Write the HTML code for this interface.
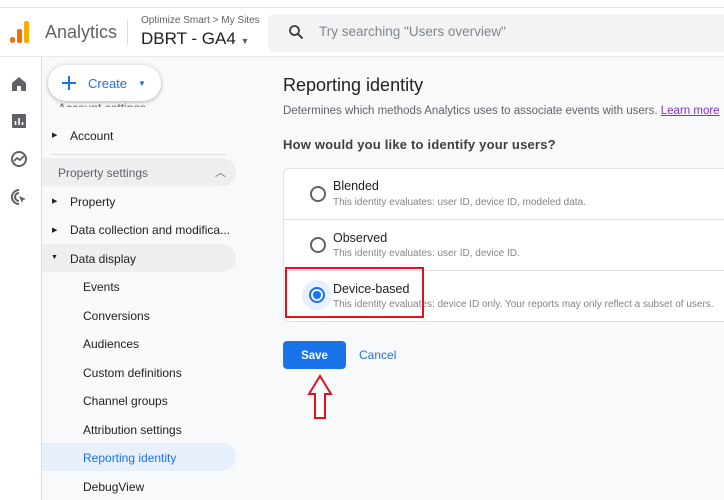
<!DOCTYPE html>
<html><head><style>
*{margin:0;padding:0;box-sizing:border-box}
body{width:724px;height:500px;overflow:hidden;background:#f8f9fa;font-family:"Liberation Sans",Arial,sans-serif;position:relative;color:#202124}
.abs{position:absolute}
.hdr{left:0;width:724px;background:#fff;border-top:1px solid #e3e3e3;top:7px;height:50px;border-bottom:1px solid #e8eaed}
.topw{left:0;top:0;width:724px;height:7px;background:#fff}
.rail{left:0;top:57px;width:42px;height:443px;background:#fff;border-right:1px solid #dadce0}
.nav{font-size:12px;color:#202124}
.tri{font-size:7px;color:#202124}
.sm{font-size:10px;color:#80868b}
</style></head><body>
<div class="abs topw"></div>
<div class="abs hdr"></div>
<div class="abs" style="left:10px;top:37px;width:5px;height:6px;border-radius:3px;background:#e8710a"></div>
<div class="abs" style="left:17px;top:29px;width:5px;height:14px;border-radius:2px;background:#e8710a"></div>
<div class="abs" style="left:24px;top:21px;width:5px;height:22px;border-radius:2px;background:#f9ab00"></div>
<div class="abs" style="left:45px;top:22px;font-size:18px;color:#5f6368">Analytics</div>
<div class="abs" style="left:127px;top:20px;width:1px;height:25px;background:#dadce0"></div>
<div class="abs" style="left:141px;top:15px;font-size:10px;color:#5f6368">Optimize Smart &gt; My Sites</div>
<div class="abs" style="left:141px;top:29px;font-size:17px;color:#202124">DBRT - GA4 <span style="font-size:9px;color:#5f6368">▼</span></div>
<div class="abs" style="left:268px;top:14px;width:470px;height:38px;background:#f1f3f4;border-radius:6px"></div>
<svg class="abs" style="left:288px;top:24px" width="16" height="16" viewBox="0 0 16 16"><circle cx="6.5" cy="6.5" r="4.5" fill="none" stroke="#3c4043" stroke-width="1.8"/><path d="M10 10l4.5 4.5" stroke="#3c4043" stroke-width="2"/></svg>
<div class="abs" style="left:319px;top:24px;font-size:13.5px;color:#80868b">Try searching "Users overview"</div>
<div class="abs rail"></div>
<svg class="abs" style="left:11px;top:76px" width="16" height="16" viewBox="0 0 16 16"><path d="M8 1L1 7v8h5v-5h4v5h5V7z" fill="#5f6368"/></svg>
<svg class="abs" style="left:11px;top:113px" width="16" height="16" viewBox="0 0 16 16"><rect x="1" y="1" width="14" height="14" rx="1" fill="#5f6368"/><path d="M4.5 12V8M8 12V5M11.5 12V9" stroke="#fff" stroke-width="1.6"/></svg>
<svg class="abs" style="left:10px;top:150px" width="18" height="18" viewBox="0 0 18 18"><circle cx="9" cy="9" r="7" fill="none" stroke="#5f6368" stroke-width="2"/><path d="M4 11l3-3 3 2 4-4" fill="none" stroke="#5f6368" stroke-width="1.8"/></svg>
<svg class="abs" style="left:10px;top:188px" width="18" height="18" viewBox="0 0 18 18"><path d="M9 2a7 7 0 1 0 0 14" fill="none" stroke="#5f6368" stroke-width="2"/><path d="M9 5a4 4 0 0 0 0 8" fill="none" stroke="#5f6368" stroke-width="2"/><path d="M9 8l7 3-3 1-1 3z" fill="#5f6368"/></svg>
<div class="abs nav" style="left:58px;top:101px;color:#5f6368;overflow:hidden;height:6px">Account settings</div>
<div class="abs tri" style="left:52px;top:131px">▶</div>
<div class="abs nav" style="left:70px;top:129px">Account</div>
<div class="abs" style="left:51px;top:154px;width:176px;height:1px;background:#e0e0e0"></div>
<div class="abs" style="left:42px;top:158px;width:194px;height:28px;background:#eceef0;border-radius:0 14px 14px 0"></div>
<div class="abs nav" style="left:58px;top:166px;color:#5f6368">Property settings</div>
<div class="abs" style="left:215px;top:164px;font-size:11px;color:#5f6368">︿</div>
<div class="abs tri" style="left:52px;top:197px">▶</div>
<div class="abs nav" style="left:70px;top:195px">Property</div>
<div class="abs tri" style="left:52px;top:226px">▶</div>
<div class="abs nav" style="left:70px;top:223px">Data collection and modifica...</div>
<div class="abs" style="left:42px;top:244px;width:194px;height:28px;background:#eceef0;border-radius:0 14px 14px 0"></div>
<div class="abs tri" style="left:51px;top:254px">▼</div>
<div class="abs nav" style="left:70px;top:252px">Data display</div>
<div class="abs nav" style="left:83px;top:280px">Events</div>
<div class="abs nav" style="left:83px;top:309px">Conversions</div>
<div class="abs nav" style="left:83px;top:337px">Audiences</div>
<div class="abs nav" style="left:83px;top:366px">Custom definitions</div>
<div class="abs nav" style="left:83px;top:394px">Channel groups</div>
<div class="abs nav" style="left:83px;top:423px">Attribution settings</div>
<div class="abs" style="left:42px;top:443px;width:194px;height:28px;background:#e8f0fe;border-radius:0 14px 14px 0"></div>
<div class="abs nav" style="left:83px;top:451px;color:#1a73e8">Reporting identity</div>
<div class="abs nav" style="left:83px;top:480px">DebugView</div>
<div class="abs" style="left:48px;top:65px;width:113px;height:36px;background:#fff;border-radius:18px;box-shadow:0 1px 4px rgba(0,0,0,.3)"></div>
<svg class="abs" style="left:62px;top:76px" width="14" height="14" viewBox="0 0 14 14"><path d="M7 0v14M0 7h14" stroke="#1a73e8" stroke-width="2"/></svg>
<div class="abs" style="left:88px;top:76px;font-size:13px;color:#1a73e8">Create</div>
<div class="abs" style="left:138px;top:79px;font-size:8px;color:#1a73e8">▼</div>
<div class="abs" style="left:283px;top:75px;font-size:18px;color:#202124">Reporting identity</div>
<div class="abs" style="left:283px;top:105px;font-size:11.5px;color:#5f6368">Determines which methods Analytics uses to associate events with users. <span style="color:#8430ce;text-decoration:underline">Learn more</span></div>
<div class="abs" style="left:283px;top:137px;font-size:13px;color:#3c4043;font-weight:bold;letter-spacing:.2px">How would you like to identify your users?</div>
<div class="abs" style="left:283px;top:168px;width:450px;height:154px;background:#fff;border:1px solid #e0e0e0;border-radius:6px"></div>
<div class="abs" style="left:284px;top:219px;width:440px;height:1px;background:#e0e0e0"></div>
<div class="abs" style="left:284px;top:270px;width:440px;height:1px;background:#e0e0e0"></div>
<div class="abs" style="left:310px;top:186px;width:16px;height:16px;border:2px solid #5f6368;border-radius:50%"></div>
<div class="abs" style="left:333px;top:179px;font-size:12.5px">Blended</div>
<div class="abs sm" style="left:333px;top:197px">This identity evaluates: user ID, device ID, modeled data.</div>
<div class="abs" style="left:310px;top:237px;width:16px;height:16px;border:2px solid #5f6368;border-radius:50%"></div>
<div class="abs" style="left:333px;top:231px;font-size:12.5px">Observed</div>
<div class="abs sm" style="left:333px;top:248px">This identity evaluates: user ID, device ID.</div>
<div class="abs" style="left:302px;top:280px;width:30px;height:30px;background:#e8f0fe;border-radius:50%"></div>
<div class="abs" style="left:309px;top:287px;width:16px;height:16px;border:2px solid #1a73e8;border-radius:50%"></div>
<div class="abs" style="left:313px;top:291px;width:8px;height:8px;background:#1a73e8;border-radius:50%"></div>
<div class="abs" style="left:333px;top:282px;font-size:12.5px">Device-based</div>
<div class="abs sm" style="left:333px;top:299px">This identity evaluates: device ID only. Your reports may only reflect a subset of users.</div>
<div class="abs" style="left:285px;top:267px;width:139px;height:51px;border:2px solid #e4111c"></div>
<div class="abs" style="left:283px;top:341px;width:63px;height:28px;background:#1a73e8;border-radius:4px;color:#fff;font-size:11.5px;font-weight:bold;text-align:center;line-height:28px;padding-top:1px">Save</div>
<div class="abs" style="left:359px;top:348px;font-size:12px;color:#1a73e8">Cancel</div>
<svg class="abs" style="left:307px;top:374px" width="26" height="46" viewBox="0 0 26 46"><path d="M13 2L24 20H18V44H8V20H2Z" fill="#fff" stroke="#e4111c" stroke-width="2"/></svg>
</body></html>
